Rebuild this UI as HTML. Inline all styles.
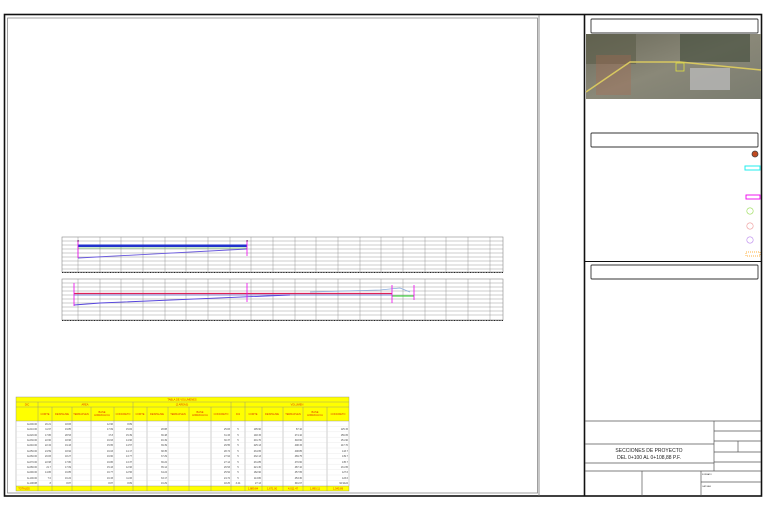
<!DOCTYPE html>
<html><head><meta charset="utf-8"><style>
html,body{margin:0;padding:0;background:#fff;width:768px;height:512px;overflow:hidden}
svg{display:block}
text{font-family:"Liberation Sans",sans-serif}
</style></head><body>
<svg width="768" height="512" viewBox="0 0 768 512" xmlns="http://www.w3.org/2000/svg">
<!-- outer frame -->
<rect x="4.5" y="14.5" width="757" height="481.5" fill="none" stroke="#111" stroke-width="1.6"/>
<rect x="7.5" y="18" width="530" height="475" fill="none" stroke="#888" stroke-width="0.8"/>
<line x1="539" y1="15" x2="539" y2="496" stroke="#777" stroke-width="0.8"/>
<line x1="584.5" y1="15" x2="584.5" y2="496" stroke="#111" stroke-width="1.6"/>

<!-- right panel -->
<rect x="591" y="19" width="167" height="14" rx="1" fill="#fff" stroke="#333" stroke-width="0.9"/>
<defs><linearGradient id="m" x1="0" y1="0" x2="1" y2="1">
<stop offset="0" stop-color="#6b6a5a"/><stop offset="0.5" stop-color="#8a8878"/><stop offset="1" stop-color="#7a7c70"/></linearGradient></defs>
<rect x="586" y="34" width="175" height="65" fill="url(#m)"/>
<rect x="586" y="34" width="50" height="30" fill="#5a5c48" opacity="0.6"/>
<rect x="680" y="34" width="70" height="28" fill="#3f4a38" opacity="0.6"/>
<rect x="690" y="68" width="40" height="22" fill="#b8b8b8" opacity="0.8"/>
<rect x="596" y="55" width="35" height="40" fill="#a86a50" opacity="0.35"/>
<path d="M586 92 L630 62 L680 62 L761 70" stroke="#d8c860" stroke-width="1.5" fill="none"/>
<rect x="676" y="63" width="8" height="8" fill="none" stroke="#e0e040" stroke-width="0.8"/>
<rect x="591" y="133" width="167" height="14" rx="1" fill="#fff" stroke="#333" stroke-width="0.9"/>
<circle cx="755" cy="154" r="3" fill="#c04a20" stroke="#444" stroke-width="0.8"/>
<rect x="745" y="166" width="15" height="4" fill="#fff" stroke="#2ee" stroke-width="1"/>
<rect x="746" y="195" width="14" height="4" fill="none" stroke="#e0e" stroke-width="0.9"/>
<circle cx="750" cy="211" r="3.2" fill="none" stroke="#9d5" stroke-width="0.6"/>
<circle cx="750" cy="226" r="3.2" fill="none" stroke="#e99" stroke-width="0.6"/>
<circle cx="750" cy="240" r="3.2" fill="none" stroke="#b8e" stroke-width="0.6"/>
<rect x="746" y="252" width="14" height="4" fill="none" stroke="#f90" stroke-width="0.7" stroke-dasharray="1,1"/>
<line x1="585" y1="261.5" x2="761" y2="261.5" stroke="#111" stroke-width="0.9"/>
<rect x="591" y="265" width="167" height="14" rx="1" fill="#fff" stroke="#333" stroke-width="0.9"/>

<!-- title block -->
<g stroke="#555" stroke-width="0.7" fill="none">
<line x1="585" y1="421" x2="761" y2="421"/>
<line x1="585" y1="444" x2="714" y2="444"/>
<line x1="585" y1="463" x2="714" y2="463"/>
<line x1="585" y1="471" x2="761" y2="471"/>
<line x1="714" y1="421" x2="714" y2="471"/>
<line x1="714" y1="431" x2="761" y2="431"/>
<line x1="714" y1="441" x2="761" y2="441"/>
<line x1="714" y1="452" x2="761" y2="452"/>
<line x1="714" y1="462" x2="761" y2="462"/>
<line x1="738" y1="441" x2="738" y2="452"/>
<line x1="642" y1="471" x2="642" y2="496"/>
<line x1="701" y1="471" x2="701" y2="496"/>
<line x1="701" y1="482" x2="761" y2="482"/>
</g>
<text x="649" y="452" font-size="5" text-anchor="middle" fill="#222">SECCIONES DE PROYECTO</text>
<text x="649" y="459" font-size="5" text-anchor="middle" fill="#222">DEL 0+100 AL 0+108,88 P.F.</text>
<text x="702" y="475" font-size="2" fill="#222">FORMATO</text>
<text x="702" y="487" font-size="2" fill="#222">CAP MAX</text>

<!-- charts -->
<g id="c1">
<rect x="62" y="237" width="441" height="35" fill="#fff" stroke="#888" stroke-width="0.6"/>
<g stroke="#999" stroke-width="0.5">
<line x1="62" y1="241" x2="503" y2="241"/><line x1="62" y1="245" x2="503" y2="245"/><line x1="62" y1="249" x2="503" y2="249"/><line x1="62" y1="253" x2="503" y2="253"/><line x1="62" y1="257" x2="503" y2="257"/><line x1="62" y1="261" x2="503" y2="261"/><line x1="62" y1="265" x2="503" y2="265"/><line x1="62" y1="269" x2="503" y2="269"/>
<line x1="78" y1="237" x2="78" y2="272"/><line x1="100" y1="237" x2="100" y2="272"/><line x1="121" y1="237" x2="121" y2="272"/><line x1="143" y1="237" x2="143" y2="272"/><line x1="165" y1="237" x2="165" y2="272"/><line x1="186" y1="237" x2="186" y2="272"/><line x1="208" y1="237" x2="208" y2="272"/><line x1="230" y1="237" x2="230" y2="272"/><line x1="251" y1="237" x2="251" y2="272"/><line x1="273" y1="237" x2="273" y2="272"/><line x1="295" y1="237" x2="295" y2="272"/><line x1="316" y1="237" x2="316" y2="272"/><line x1="338" y1="237" x2="338" y2="272"/><line x1="360" y1="237" x2="360" y2="272"/><line x1="381" y1="237" x2="381" y2="272"/><line x1="403" y1="237" x2="403" y2="272"/><line x1="425" y1="237" x2="425" y2="272"/><line x1="446" y1="237" x2="446" y2="272"/><line x1="468" y1="237" x2="468" y2="272"/><line x1="490" y1="237" x2="490" y2="272"/>
</g>
<line x1="62" y1="272.5" x2="503" y2="272.5" stroke="#222" stroke-width="1" stroke-dasharray="1,0.6"/>
</g>
<rect x="78" y="244.5" width="169" height="2.5" fill="#2233cc"/>
<line x1="78" y1="248" x2="247" y2="248" stroke="#3a3" stroke-width="0.6"/>
<path d="M78 258 L247 249" stroke="#6655dd" stroke-width="0.9" fill="none"/>
<line x1="78" y1="240" x2="78" y2="258" stroke="#e0e" stroke-width="0.8"/>
<line x1="247" y1="240" x2="247" y2="256" stroke="#e0e" stroke-width="0.8"/>
<text x="77" y="242" font-size="4" fill="#222">×</text><text x="246" y="242" font-size="4" fill="#222">×</text>

<g>
<rect x="62" y="279" width="441" height="41" fill="#fff" stroke="#888" stroke-width="0.6"/>
<g stroke="#999" stroke-width="0.5">
<line x1="62" y1="283" x2="503" y2="283"/><line x1="62" y1="287" x2="503" y2="287"/><line x1="62" y1="291" x2="503" y2="291"/><line x1="62" y1="295" x2="503" y2="295"/><line x1="62" y1="299" x2="503" y2="299"/><line x1="62" y1="303" x2="503" y2="303"/><line x1="62" y1="307" x2="503" y2="307"/><line x1="62" y1="311" x2="503" y2="311"/><line x1="62" y1="315" x2="503" y2="315"/>
<line x1="78" y1="279" x2="78" y2="320"/><line x1="100" y1="279" x2="100" y2="320"/><line x1="121" y1="279" x2="121" y2="320"/><line x1="143" y1="279" x2="143" y2="320"/><line x1="165" y1="279" x2="165" y2="320"/><line x1="186" y1="279" x2="186" y2="320"/><line x1="208" y1="279" x2="208" y2="320"/><line x1="230" y1="279" x2="230" y2="320"/><line x1="251" y1="279" x2="251" y2="320"/><line x1="273" y1="279" x2="273" y2="320"/><line x1="295" y1="279" x2="295" y2="320"/><line x1="316" y1="279" x2="316" y2="320"/><line x1="338" y1="279" x2="338" y2="320"/><line x1="360" y1="279" x2="360" y2="320"/><line x1="381" y1="279" x2="381" y2="320"/><line x1="403" y1="279" x2="403" y2="320"/><line x1="425" y1="279" x2="425" y2="320"/><line x1="446" y1="279" x2="446" y2="320"/><line x1="468" y1="279" x2="468" y2="320"/><line x1="490" y1="279" x2="490" y2="320"/>
</g>
<line x1="62" y1="320.5" x2="503" y2="320.5" stroke="#222" stroke-width="1" stroke-dasharray="1,0.6"/>
</g>
<line x1="74" y1="293.5" x2="392" y2="293.5" stroke="#dd2255" stroke-width="1.2"/>
<line x1="74" y1="295" x2="392" y2="295" stroke="#3344dd" stroke-width="0.6"/>
<path d="M74 305 L100 303 L290 295" stroke="#5544dd" stroke-width="0.9" fill="none"/>
<path d="M310 292 L380 290 L400 288 L410 292" stroke="#8ad" stroke-width="0.7" fill="none"/>
<line x1="392" y1="296" x2="414" y2="296" stroke="#2c2" stroke-width="1"/>
<line x1="74" y1="283" x2="74" y2="306" stroke="#e0e" stroke-width="0.8"/>
<line x1="247" y1="283" x2="247" y2="302" stroke="#e0e" stroke-width="0.8"/>
<line x1="392" y1="285" x2="392" y2="303" stroke="#e0e" stroke-width="0.8"/>
<line x1="414" y1="285" x2="414" y2="300" stroke="#e0e" stroke-width="0.8"/>

<!-- volume table -->
<rect x="16" y="397" width="333" height="24" fill="#ffff00"/>
<rect x="16" y="486" width="333" height="5" fill="#ffff00"/>
<rect x="16" y="421" width="333" height="65" fill="#fff"/>
<g stroke="#888" stroke-width="0.4" fill="none">
<rect x="16" y="397" width="333" height="94"/>
<line x1="16" y1="402" x2="349" y2="402"/><line x1="16" y1="407" x2="349" y2="407"/><line x1="16" y1="421" x2="349" y2="421"/><line x1="16" y1="486" x2="349" y2="486"/>
<path d="M38 402V491M52 407V491M72 407V491M91 407V491M114 407V491M133 402V491M147 407V491M168 407V491M189 407V491M211 407V491M231 402V491M245 402V491M262 407V491M283 407V491M303 407V491M327 407V491"/>
</g>
<g stroke="#ddd" stroke-width="0.3">
<path d="M16 426.4H349M16 431.8H349M16 437.2H349M16 442.6H349M16 448H349M16 453.4H349M16 458.8H349M16 464.2H349M16 469.6H349M16 475H349M16 480.4H349"/>
</g>
<g font-size="2.6" fill="#e03000" text-anchor="middle">
<text x="182" y="400.5">TABLA DE VOLUMENES</text>
<text x="27" y="405.5">DIC</text><text x="85" y="405.5">AREA</text><text x="182" y="405.5">(2 AREAS)</text><text x="297" y="405.5">VOLUMEN</text>
<text x="238" y="415">D/2</text>
<text x="45" y="415">CORTE</text><text x="62" y="415">DESPALME</text><text x="81" y="415">TERRAPLEN</text><text x="102" y="413">BASE</text><text x="102" y="416">HIDRAULICA</text><text x="123" y="415">CONCRETO</text>
<text x="140" y="415">CORTE</text><text x="157" y="415">DESPALME</text><text x="178" y="415">TERRAPLEN</text><text x="200" y="413">BASE</text><text x="200" y="416">HIDRAULICA</text><text x="221" y="415">CONCRETO</text>
<text x="253" y="415">CORTE</text><text x="272" y="415">DESPALME</text><text x="293" y="415">TERRAPLEN</text><text x="315" y="413">BASE</text><text x="315" y="416">HIDRAULICA</text><text x="338" y="415">CONCRETO</text>
<text x="24" y="489.5">TOTALES</text>
<text x="253" y="489.5">1,889.84</text><text x="272" y="489.5">1,671.00</text><text x="293" y="489.5">4,011.47</text><text x="315" y="489.5">1,890.11</text><text x="338" y="489.5">1,545.89</text>
</g>
<g font-size="2.4" fill="#444" text-anchor="end">
<text x="37" y="425">0+000.00</text><text x="37" y="430">0+010.00</text><text x="37" y="436">0+020.00</text><text x="37" y="441">0+030.00</text><text x="37" y="446">0+040.00</text><text x="37" y="452">0+050.00</text><text x="37" y="457">0+060.00</text><text x="37" y="463">0+070.00</text><text x="37" y="468">0+080.00</text><text x="37" y="473">0+090.00</text><text x="37" y="479">0+100.00</text><text x="37" y="484">0+108.88</text>
<text x="51" y="425">20.21</text><text x="51" y="430">11.97</text><text x="51" y="436">17.86</text><text x="51" y="441">22.60</text><text x="51" y="446">22.34</text><text x="51" y="452">24.59</text><text x="51" y="457">20.83</text><text x="51" y="463">22.68</text><text x="51" y="468">21.7</text><text x="51" y="473">14.86</text><text x="51" y="479">7.0</text><text x="51" y="484">8</text>
<text x="71" y="425">18.83</text><text x="71" y="430">19.85</text><text x="71" y="436">28.53</text><text x="71" y="441">18.96</text><text x="71" y="446">19.43</text><text x="71" y="452">18.92</text><text x="71" y="457">18.27</text><text x="71" y="463">17.80</text><text x="71" y="468">17.09</text><text x="71" y="473">16.85</text><text x="71" y="479">16.22</text><text x="71" y="484">8.87</text>
<text x="113" y="425">12.96</text><text x="113" y="430">17.09</text><text x="113" y="436">17.8</text><text x="113" y="441">16.63</text><text x="113" y="446">15.65</text><text x="113" y="452">16.03</text><text x="113" y="457">16.60</text><text x="113" y="463">16.86</text><text x="113" y="468">15.43</text><text x="113" y="473">16.77</text><text x="113" y="479">16.33</text><text x="113" y="484">8.87</text>
<text x="132" y="425">8.89</text><text x="132" y="430">15.84</text><text x="132" y="436">15.39</text><text x="132" y="441">14.96</text><text x="132" y="446">14.57</text><text x="132" y="452">14.17</text><text x="132" y="457">13.77</text><text x="132" y="463">13.37</text><text x="132" y="468">12.96</text><text x="132" y="473">12.56</text><text x="132" y="479">11.06</text><text x="132" y="484">8.89</text>
<text x="261" y="430">195.90</text><text x="261" y="436">148.15</text><text x="261" y="441">201.70</text><text x="261" y="446">225.13</text><text x="261" y="452">234.65</text><text x="261" y="457">232.13</text><text x="261" y="463">231.85</text><text x="261" y="468">221.30</text><text x="261" y="473">182.90</text><text x="261" y="479">113.80</text><text x="261" y="484">27.13</text>
<text x="302" y="430">87.10</text><text x="302" y="436">274.10</text><text x="302" y="441">318.60</text><text x="302" y="446">408.15</text><text x="302" y="452">408.85</text><text x="302" y="457">469.75</text><text x="302" y="463">470.60</text><text x="302" y="468">487.10</text><text x="302" y="473">457.65</text><text x="302" y="479">453.30</text><text x="302" y="484">391.67</text>
<text x="348" y="430">125.15</text><text x="348" y="436">156.05</text><text x="348" y="441">151.90</text><text x="348" y="446">147.70</text><text x="348" y="452">143.7</text><text x="348" y="457">139.7</text><text x="348" y="463">135.7</text><text x="348" y="468">131.65</text><text x="348" y="473">127.6</text><text x="348" y="479">123.6</text><text x="348" y="484">92.9424</text>
<text x="167" y="430">28.88</text><text x="167" y="436">36.48</text><text x="167" y="441">46.49</text><text x="167" y="446">39.39</text><text x="167" y="452">38.35</text><text x="167" y="457">37.29</text><text x="167" y="463">36.22</text><text x="167" y="468">35.14</text><text x="167" y="473">34.24</text><text x="167" y="479">33.17</text><text x="167" y="484">16.29</text>
<text x="230" y="430">25.83</text><text x="230" y="436">31.33</text><text x="230" y="441">30.37</text><text x="230" y="446">29.55</text><text x="230" y="452">28.74</text><text x="230" y="457">27.94</text><text x="230" y="463">27.14</text><text x="230" y="468">26.53</text><text x="230" y="473">25.52</text><text x="230" y="479">24.72</text><text x="230" y="484">18.25</text>
</g>
<g font-size="2.4" fill="#444" text-anchor="middle">
<text x="238" y="430">5</text><text x="238" y="436">5</text><text x="238" y="441">5</text><text x="238" y="446">5</text><text x="238" y="452">5</text><text x="238" y="457">5</text><text x="238" y="463">5</text><text x="238" y="468">5</text><text x="238" y="473">5</text><text x="238" y="479">5</text><text x="238" y="484">3.44</text>
</g>
</svg>
</body></html>
